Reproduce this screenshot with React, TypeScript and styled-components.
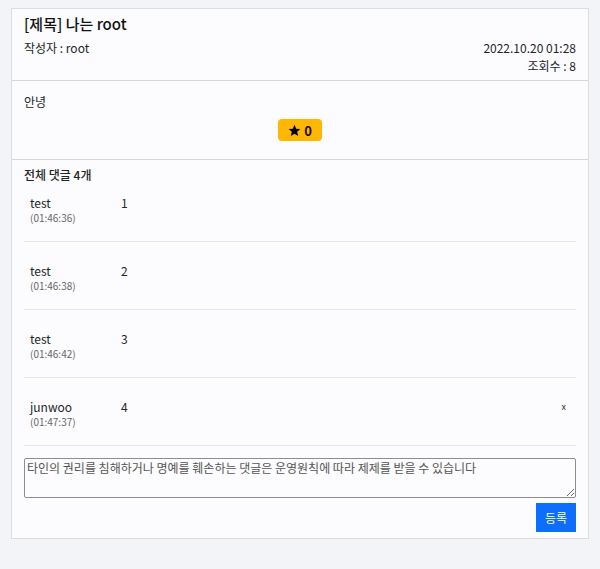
import React from "react";
import styled, { createGlobalStyle } from "styled-components";

const Global = createGlobalStyle`
  html, body { margin: 0; padding: 0; background: #f3f4f7; }
  body {
    font-family: "Noto Sans CJK KR", "Noto Sans", sans-serif;
    color: #212529;
  }
  * { box-sizing: border-box; }
`;

const Page = styled.div`
  padding: 8px 11px 30px 11px;
`;

const Card = styled.div`
  background: #fcfcfe;
  border: 1px solid #dcdcdf;
`;

const Section = styled.div<{ $pad: string }>`
  padding: ${(p) => p.$pad};
  border-bottom: 1px solid #d6d6d9;
  &:last-child { border-bottom: none; }
`;

const Title = styled.h1`
  margin: 0;
  font-size: 15px;
  line-height: 22px;
  font-weight: 500;
  color: #111;
`;

const MetaRow = styled.div`
  display: flex;
  justify-content: space-between;
  margin-top: 4px;
  font-size: 12px;
  line-height: 18px;
`;

const MetaRight = styled.div`
  text-align: right;
`;

const Body = styled.div`
  font-size: 12px;
  line-height: 18px;
`;

const Center = styled.div`
  display: flex;
  justify-content: center;
  margin-top: 8px;
`;

const StarButton = styled.button`
  display: inline-flex;
  align-items: center;
  gap: 3px;
  height: 22px;
  padding: 0 10px;
  border: none;
  border-radius: 4px;
  background: #ffb703;
  font-family: inherit;
  font-size: 13px;
  font-weight: 700;
  color: #111;
`;

const Heading = styled.div`
  font-size: 12px;
  line-height: 16px;
  font-weight: 500;
`;

const CommentRow = styled.div`
  display: flex;
  align-items: flex-start;
  padding: 21px 10px 16px 6px;
  border-bottom: 1px solid #e6e6e9;
  &:first-child { padding-top: 12px; }
`;

const Author = styled.div`
  width: 91px;
  flex-shrink: 0;
`;

const Name = styled.div`
  font-size: 12px;
  line-height: 16px;
`;

const Time = styled.div`
  font-size: 10px;
  line-height: 14px;
  color: #666;
`;

const Content = styled.div`
  flex: 1;
  font-size: 12px;
  line-height: 16px;
`;

const Remove = styled.span`
  font-size: 9px;
  line-height: 16px;
  color: #333;
`;

const TextArea = styled.textarea`
  display: block;
  width: 100%;
  height: 40px;
  margin-top: 12px;
  padding: 1px 2px;
  border: 1px solid #8d8d8d;
  border-radius: 2px;
  background: #fcfcfe;
  font-family: inherit;
  font-size: 12px;
  line-height: 16px;
  resize: vertical;
  &::placeholder { color: #555; }
`;

const Actions = styled.div`
  display: flex;
  justify-content: flex-end;
  margin-top: 5px;
`;

const Submit = styled.button`
  width: 40px;
  height: 29px;
  border: none;
  background: #0d6efd;
  color: #fff;
  font-family: inherit;
  font-size: 12px;
`;

const comments = [
  { name: "test", time: "(01:46:36)", text: "1", mine: false },
  { name: "test", time: "(01:46:38)", text: "2", mine: false },
  { name: "test", time: "(01:46:42)", text: "3", mine: false },
  { name: "junwoo", time: "(01:47:37)", text: "4", mine: true },
];

const Star = () => (
  <svg width="13" height="13" viewBox="0 0 24 24" aria-hidden>
    <path
      d="M12 1.5l3.1 7.1 7.7.7-5.8 5.1 1.7 7.6L12 18l-6.7 4 1.7-7.6L1.2 9.3l7.7-.7z"
      fill="#000"
    />
  </svg>
);

export default function App() {
  return (
    <>
      <Global />
      <Page>
        <Card>
          <Section $pad="4px 12px 5px 12px">
            <Title>[제목] 나는 root</Title>
            <MetaRow>
              <div>작성자 : root</div>
              <MetaRight>
                <div>2022.10.20 01:28</div>
                <div>조회수 : 8</div>
              </MetaRight>
            </MetaRow>
          </Section>
          <Section $pad="12px 12px 18px 12px">
            <Body>안녕</Body>
            <Center>
              <StarButton>
                <Star />0
              </StarButton>
            </Center>
          </Section>
          <Section $pad="7px 12px 6px 12px">
            <Heading>전체 댓글 4개</Heading>
            <div>
              {comments.map((c, i) => (
                <CommentRow key={i}>
                  <Author>
                    <Name>{c.name}</Name>
                    <Time>{c.time}</Time>
                  </Author>
                  <Content>{c.text}</Content>
                  {c.mine && <Remove>x</Remove>}
                </CommentRow>
              ))}
            </div>
            <TextArea placeholder="타인의 권리를 침해하거나 명예를 훼손하는 댓글은 운영원칙에 따라 제제를 받을 수 있습니다" />
            <Actions>
              <Submit>등록</Submit>
            </Actions>
          </Section>
        </Card>
      </Page>
    </>
  );
}
